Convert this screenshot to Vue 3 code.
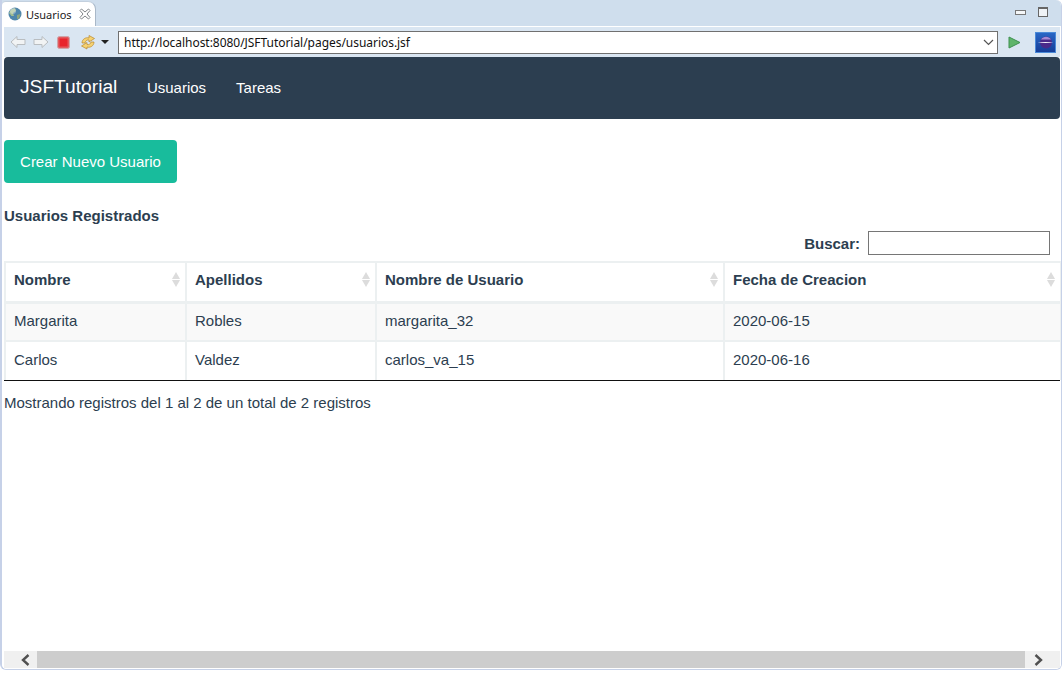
<template>
  <div class="window">
    <div class="frame">
      <div class="tab-bar">
        <div class="tab">
          <svg class="globe" width="14" height="14" viewBox="0 0 14 14">
            <circle cx="7" cy="7" r="6.5" fill="#4f86ab" />
            <path d="M3 2.5 L7 1 L8 4 L5 6 L6 9 L3.5 9 L1 6 Z" fill="#a3bd92" />
            <path d="M9 8 L12.5 7 L11 11.5 L9 12 Z" fill="#8fa67c" />
            <circle cx="5" cy="4" r="3" fill="#ffffff" opacity="0.35" />
          </svg>
          <span class="tab-title">Usuarios</span>
          <svg class="tab-close" width="12" height="12" viewBox="0 0 12 12">
            <path d="M1 2.5 L2.5 1 L6 4 L9.5 1 L11 2.5 L8 6 L11 9.5 L9.5 11 L6 8 L2.5 11 L1 9.5 L4 6 Z" fill="#fff" stroke="#7f8488" stroke-width="1" />
          </svg>
        </div>
        <div class="win-buttons">
          <span class="win-min"></span>
          <span class="win-max"></span>
        </div>
      </div>

      <div class="toolbar-wrap">
        <div class="toolbar">
          <svg class="tool" width="16" height="14" viewBox="0 0 16 14">
            <path d="M1 7 L7 1.5 V4.5 H15 V9.5 H7 V12.5 Z" fill="#f1f3f4" stroke="#b9bdc0" />
          </svg>
          <svg class="tool" width="16" height="14" viewBox="0 0 16 14">
            <path d="M15 7 L9 1.5 V4.5 H1 V9.5 H9 V12.5 Z" fill="#f1f3f4" stroke="#b9bdc0" />
          </svg>
          <svg class="tool stop" width="13" height="13" viewBox="0 0 13 13">
            <rect x="0.5" y="0.5" width="12" height="12" rx="2" fill="#e25a5f" stroke="#cfa4a8" />
            <rect x="2.5" y="2.5" width="8" height="8" fill="#e8242c" />
          </svg>
          <svg class="tool refresh" width="16" height="16" viewBox="0 0 16 16">
            <path d="M2 9 C2 5 6 3 9 4 L9 1.5 L14.5 4.5 L9 8 L9 6 C7 5.5 5.5 7 5 9 Z" fill="#f6d271" stroke="#b8862b" stroke-width="0.7" />
            <path d="M14 8 C14 12 10 14 7 13 L7 15 L1.5 12 L7 8.5 L7 10.5 C9 11 10.5 10 11 8 Z" fill="#f6d271" stroke="#b8862b" stroke-width="0.7" />
          </svg>
          <span class="drop-arrow"></span>
          <div class="url-box">
            <span class="url-text">http://localhost:8080/JSFTutorial/pages/usuarios.jsf</span>
            <svg width="11" height="7" viewBox="0 0 11 7">
              <path d="M1 1 L5.5 5.5 L10 1" fill="none" stroke="#555" stroke-width="1.2" />
            </svg>
          </div>
          <svg class="go" width="13" height="13" viewBox="0 0 13 13">
            <path d="M1 1 L12 6.5 L1 12 Z" fill="#5fb56b" stroke="#3f9150" />
          </svg>
          <svg class="eclipse" width="21" height="21" viewBox="0 0 21 21">
            <defs>
              <linearGradient id="eclipseBg" x1="0" y1="0" x2="0" y2="1">
                <stop offset="0" stop-color="#2a68c6" />
                <stop offset="1" stop-color="#143c98" />
              </linearGradient>
            </defs>
            <rect x="0.5" y="0.5" width="20" height="20" fill="url(#eclipseBg)" stroke="#4a8ad8" />
            <circle cx="11" cy="10.5" r="6" fill="#4a2a8a" />
            <path d="M6 7.5 A6 6 0 0 1 16 7.5 Z" fill="#a48ad4" />
            <path d="M2.5 10.5 Q10.5 9.3 18.5 10.5 Q10.5 11.7 2.5 10.5 Z" fill="#f2eefa" />
          </svg>
        </div>
      </div>

      <div class="page">
        <div class="page-scroll">
          <nav class="navbar">
            <span class="brand">JSFTutorial</span>
            <a class="nav-link">Usuarios</a>
            <a class="nav-link">Tareas</a>
          </nav>

          <button class="btn-new">Crear Nuevo Usuario</button>

          <h3 class="section-title">Usuarios Registrados</h3>

          <div class="search-row">
            <label class="search-label">Buscar:</label>
            <input class="search-input" type="text" />
          </div>

          <div class="table-wrap">
            <table class="data-table">
              <thead>
                <tr>
                  <th v-for="col in columns" :key="col.label" :style="{ width: col.width + 'px' }">
                    {{ col.label }}
                    <span class="sort">
                      <i class="up"></i>
                      <i class="down"></i>
                    </span>
                  </th>
                </tr>
              </thead>
              <tbody>
                <tr v-for="row in rows" :key="row[2]">
                  <td v-for="cell in row" :key="cell">{{ cell }}</td>
                </tr>
              </tbody>
            </table>
          </div>

          <div class="info">Mostrando registros del 1 al 2 de un total de 2 registros</div>
        </div>

        <div class="hscroll">
          <div class="scroll-btn">
            <svg width="12" height="12" viewBox="0 0 12 12">
              <path d="M8.5 1 L3 6 L8.5 11" fill="none" stroke="#505050" stroke-width="2.4" />
            </svg>
          </div>
          <div class="scroll-thumb"></div>
          <div class="scroll-btn right">
            <svg width="12" height="12" viewBox="0 0 12 12">
              <path d="M3.5 1 L9 6 L3.5 11" fill="none" stroke="#505050" stroke-width="2.4" />
            </svg>
          </div>
        </div>
      </div>
    </div>
  </div>
</template>

<script setup>
const columns = [
  { label: 'Nombre', width: 181 },
  { label: 'Apellidos', width: 190 },
  { label: 'Nombre de Usuario', width: 348 },
  { label: 'Fecha de Creacion', width: 337 }
]

const rows = [
  ['Margarita', 'Robles', 'margarita_32', '2020-06-15'],
  ['Carlos', 'Valdez', 'carlos_va_15', '2020-06-16']
]
</script>

<style>
html,
body {
  margin: 0;
  overflow: hidden;
}
</style>

<style scoped>
.window {
  width: 1063px;
  height: 673px;
  background: #fff;
  font-family: "Liberation Sans", Arial, sans-serif;
  color: #2c3e50;
  overflow: hidden;
}

.frame {
  width: 1062px;
  height: 670px;
  box-sizing: border-box;
  display: flex;
  flex-direction: column;
  background: #fff;
  border-left: 2px solid #c6d1e8;
  border-right: 1px solid #c6d1e8;
  border-bottom: 1px solid #c6d1e8;
  border-radius: 0 6px 6px 6px;
  overflow: hidden;
}

.tab-bar {
  height: 26px;
  display: flex;
  justify-content: space-between;
  align-items: flex-end;
  flex-shrink: 0;
  background: #cfdeed;
}

.tab {
  width: 94px;
  height: 25px;
  box-sizing: border-box;
  padding: 0 6px;
  display: flex;
  align-items: center;
  background: #fff;
  border-top: 1px solid #c3d0de;
  border-right: 1px solid #a9b8c8;
  border-radius: 4px 8px 0 0;
}

.globe {
  flex-shrink: 0;
}

.tab-title {
  margin-left: 4px;
  font-family: "Noto Sans", sans-serif;
  font-size: 11px;
  color: #222;
}

.tab-close {
  margin-left: 7px;
  flex-shrink: 0;
}

.win-buttons {
  display: flex;
  align-items: center;
  gap: 12px;
  margin-right: 13px;
  margin-bottom: 9px;
}

.win-min {
  width: 9px;
  height: 3px;
  background: #f4f6f8;
  border: 1px solid #777;
}

.win-max {
  width: 8px;
  height: 7px;
  background: #eef2f6;
  border: 1px solid #666;
  border-top-width: 2px;
}

.toolbar-wrap {
  padding: 1px 1px 0 2px;
  flex-shrink: 0;
}

.toolbar {
  height: 30px;
  display: flex;
  align-items: center;
  background: #dae6f2;
  box-sizing: border-box;
  padding-left: 6px;
}

.tool {
  margin-right: 7px;
  flex-shrink: 0;
}

.stop {
  margin-left: 1px;
  margin-right: 10px;
}

.refresh {
  margin-right: 5px;
}

.drop-arrow {
  width: 0;
  height: 0;
  border-left: 4px solid transparent;
  border-right: 4px solid transparent;
  border-top: 4px solid #222;
  margin-right: 9px;
}

.url-box {
  width: 880px;
  height: 23px;
  box-sizing: border-box;
  display: flex;
  align-items: center;
  justify-content: space-between;
  padding: 0 3px 0 5px;
  background: #fff;
  border: 1px solid #707070;
}

.url-text {
  font-family: "Noto Sans", sans-serif;
  font-size: 12px;
  letter-spacing: -0.04px;
  color: #111;
}

.go {
  margin-left: 10px;
}

.eclipse {
  margin-left: 14px;
}

.page {
  flex: 1;
  min-height: 0;
  padding: 0 1px 1px 2px;
  display: flex;
  flex-direction: column;
  background: #fff;
}

.page-scroll {
  flex: 1;
  min-height: 0;
}

.navbar {
  height: 62px;
  box-sizing: border-box;
  padding: 0 0 2px 16px;
  display: flex;
  align-items: center;
  background: #2c3e50;
  border-radius: 4px;
}

.brand {
  font-size: 19.2px;
  color: #fff;
  margin-right: 14.5px;
}

.nav-link {
  font-size: 15px;
  color: #fff;
  padding: 0 15px;
}

.btn-new {
  display: block;
  margin-top: 21px;
  height: 43px;
  width: 173px;
  padding: 0;
  border: none;
  border-radius: 4px;
  background: #18bc9c;
  color: #fff;
  font-family: inherit;
  font-size: 15px;
}

.section-title {
  margin: 24px 0 0;
  font-size: 15px;
  line-height: 17px;
  font-weight: 700;
}

.search-row {
  margin-top: 7px;
  height: 24px;
  display: flex;
  justify-content: flex-end;
  align-items: center;
  padding-right: 10px;
}

.search-label {
  font-size: 15px;
  font-weight: 700;
  margin-right: 8px;
}

.search-input {
  width: 182px;
  height: 24px;
  box-sizing: border-box;
  border: 1px solid #767676;
  padding: 0;
  background: #fff;
}

.table-wrap {
  margin-top: 6px;
  width: 1056px;
  border-bottom: 1px solid #111;
}

.data-table {
  width: 1056px;
  table-layout: fixed;
  border-collapse: collapse;
  font-size: 15px;
}

.data-table th {
  position: relative;
  height: 40px;
  box-sizing: border-box;
  padding: 0 8px 4px;
  text-align: left;
  font-weight: 700;
  border: 2px solid #ecf0f1;
  border-bottom-width: 3px;
}

.data-table td {
  height: 39px;
  box-sizing: border-box;
  padding: 0 8px 2px;
  border: 2px solid #ecf0f1;
}

.data-table tbody tr:nth-child(odd) {
  background: #f9f9f9;
}

.data-table tbody tr:last-child td {
  border-bottom: none;
  padding-bottom: 4px;
}

.sort {
  position: absolute;
  right: 5px;
  top: 50%;
  margin-top: -10px;
  display: flex;
  flex-direction: column;
  gap: 1px;
}

.sort i {
  display: block;
  width: 0;
  height: 0;
  border-left: 4.5px solid transparent;
  border-right: 4.5px solid transparent;
}

.sort .up {
  border-bottom: 7px solid #dcdcdc;
}

.sort .down {
  border-top: 7px solid #dcdcdc;
}

.info {
  margin-top: 13px;
  font-size: 15px;
  line-height: 17px;
}

.hscroll {
  height: 17px;
  display: flex;
  flex-shrink: 0;
  background: #f0f0f0;
}

.scroll-btn {
  width: 33px;
  box-sizing: border-box;
  padding-left: 10px;
  display: flex;
  align-items: center;
  justify-content: center;
}

.scroll-btn.right {
  width: 35px;
  padding: 0 10px 0 0;
}

.scroll-thumb {
  flex: 1;
  background: #cdcdcd;
}
</style>
